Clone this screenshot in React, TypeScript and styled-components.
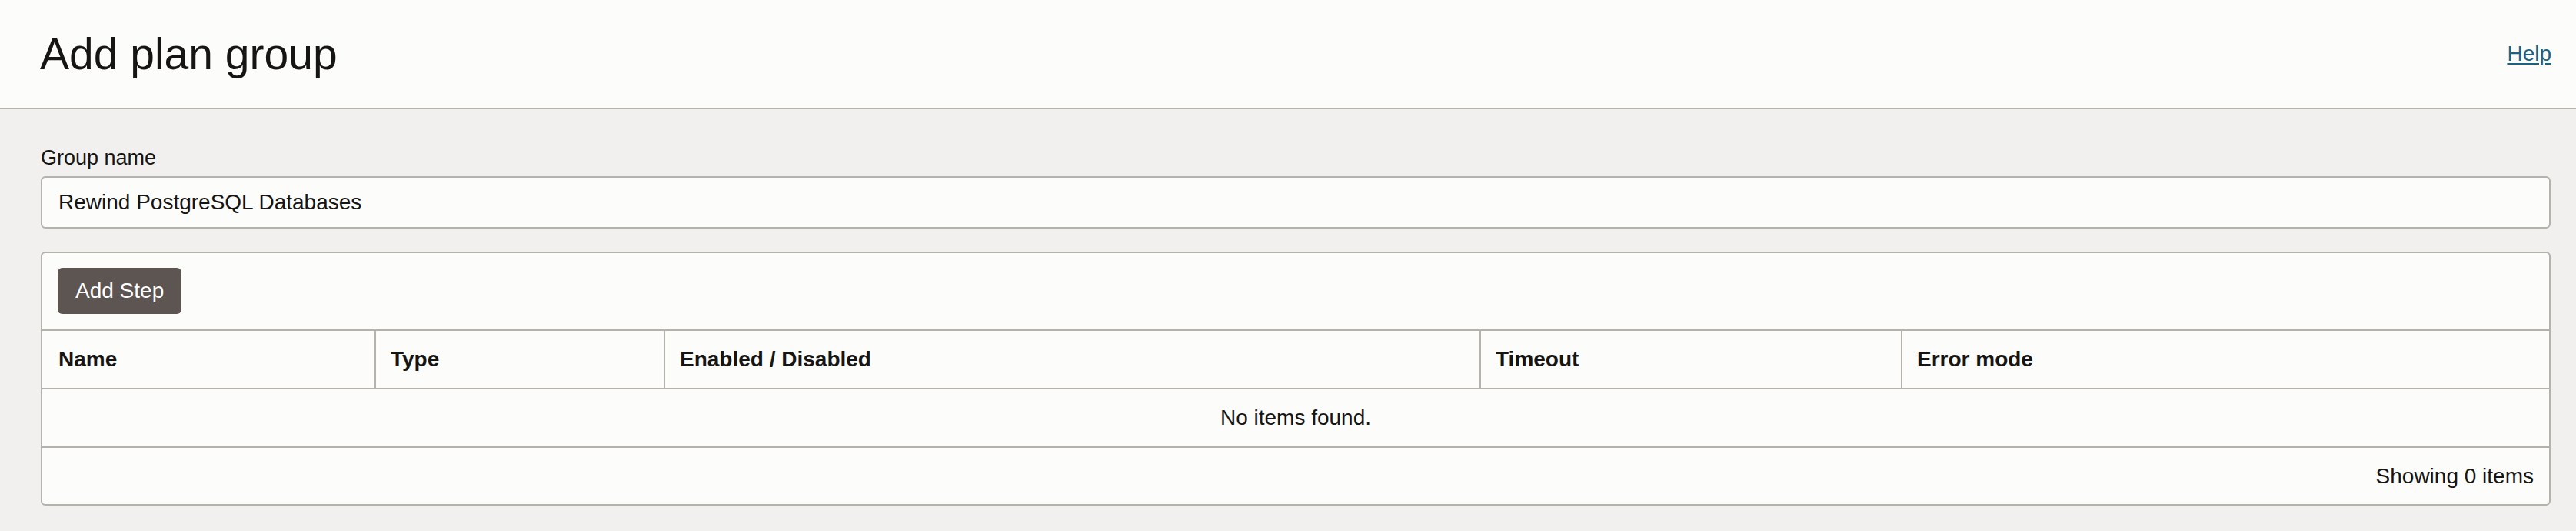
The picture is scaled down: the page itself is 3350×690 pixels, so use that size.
import styled, { createGlobalStyle } from 'styled-components'

const textColor = '#161513'
const lineColor = '#b5b1ab'
const panelColor = '#fcfcfb'
const pageColor = '#f1f0ee'
const linkColor = '#1e6282'
const font = '"Liberation Sans", Arial, Helvetica, sans-serif'

const GlobalStyle = createGlobalStyle`
  html, body {
    margin: 0;
    padding: 0;
    background: ${pageColor};
    font-family: ${font};
    color: ${textColor};
  }
`

const Page = styled.div`
  min-height: 100vh;
  background: ${pageColor};
`

const Header = styled.header`
  height: 140px;
  display: flex;
  align-items: center;
  justify-content: space-between;
  padding: 0 32px 0 52px;
  background: ${panelColor};
  border-bottom: 2px solid ${lineColor};
`

const Title = styled.h1`
  margin: 0;
  font-size: 57px;
  font-weight: 400;
  line-height: 64px;
`

const HelpLink = styled.a`
  font-size: 28px;
  color: ${linkColor};
  text-decoration: underline;
  text-underline-offset: 3px;
  cursor: pointer;
`

const Content = styled.main`
  padding: 48px 33px 0 53px;
`

const Label = styled.label`
  display: block;
  font-size: 27px;
  line-height: 31px;
  margin-bottom: 8px;
`

const TextInput = styled.input`
  display: block;
  box-sizing: border-box;
  width: 100%;
  height: 68px;
  padding: 0 21px;
  border: 2px solid ${lineColor};
  border-radius: 6px;
  background: ${panelColor};
  font-family: ${font};
  font-size: 28px;
  color: ${textColor};
  outline: none;
`

const Card = styled.section`
  margin-top: 30px;
  border: 2px solid ${lineColor};
  border-radius: 6px;
  background: ${panelColor};
  overflow: hidden;
`

const Toolbar = styled.div`
  display: flex;
  padding: 19px 20px 20px;
  border-bottom: 2px solid ${lineColor};
`

const Button = styled.button`
  height: 60px;
  padding: 0 23px;
  border: none;
  border-radius: 6px;
  background: #5c5552;
  color: #ffffff;
  font-family: ${font};
  font-size: 28px;
  cursor: pointer;
`

const HeadRow = styled.div`
  display: grid;
  grid-template-columns: 432px 376px 1061px 548px 1fr;
  height: 74px;
  border-bottom: 2px solid ${lineColor};
`

const HeadCell = styled.div<{ first?: boolean }>`
  display: flex;
  align-items: center;
  padding: 0 20px 0 ${(p) => (p.first ? '21px' : '19px')};
  border-left: ${(p) => (p.first ? 'none' : `2px solid ${lineColor}`)};
  font-size: 28px;
  font-weight: 700;
`

const EmptyRow = styled.div`
  height: 74px;
  display: flex;
  align-items: center;
  justify-content: center;
  font-size: 28px;
  border-bottom: 2px solid ${lineColor};
`

const Footer = styled.div`
  height: 73px;
  display: flex;
  align-items: center;
  justify-content: flex-end;
  padding: 0 20px;
  font-size: 28px;
`

const columns = ['Name', 'Type', 'Enabled / Disabled', 'Timeout', 'Error mode']

export default function App() {
  return (
    <Page>
      <GlobalStyle />
      <Header>
        <Title>Add plan group</Title>
        <HelpLink>Help</HelpLink>
      </Header>
      <Content>
        <Label htmlFor="group-name">Group name</Label>
        <TextInput
          id="group-name"
          defaultValue="Rewind PostgreSQL Databases"
        />
        <Card>
          <Toolbar>
            <Button>Add Step</Button>
          </Toolbar>
          <HeadRow>
            {columns.map((c, i) => (
              <HeadCell key={c} first={i === 0}>
                {c}
              </HeadCell>
            ))}
          </HeadRow>
          <EmptyRow>No items found.</EmptyRow>
          <Footer>Showing 0 items</Footer>
        </Card>
      </Content>
    </Page>
  )
}
